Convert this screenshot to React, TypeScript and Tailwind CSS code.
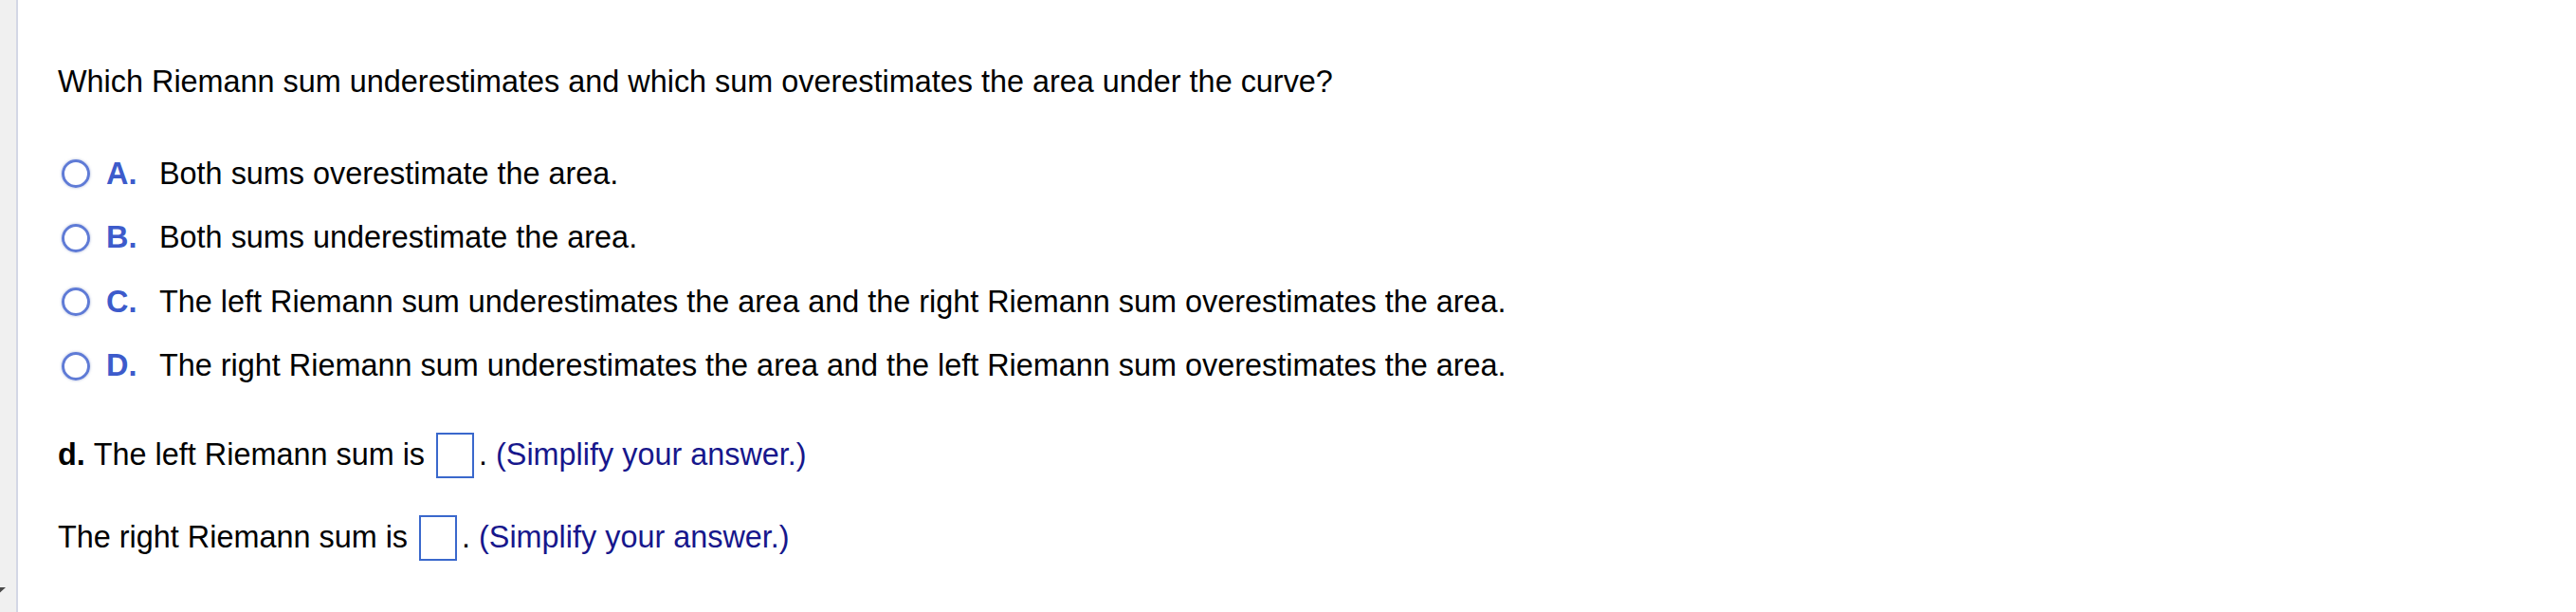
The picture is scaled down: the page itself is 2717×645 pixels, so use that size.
import React from 'react';

const options = [
  { letter: 'A.', text: 'Both sums overestimate the area.' },
  { letter: 'B.', text: 'Both sums underestimate the area.' },
  { letter: 'C.', text: 'The left Riemann sum underestimates the area and the right Riemann sum overestimates the area.' },
  { letter: 'D.', text: 'The right Riemann sum underestimates the area and the left Riemann sum overestimates the area.' },
];

const AnswerBox = () => (
  <span className="inline-block w-[40px] h-[48px] border-2 border-[#3a68cc] bg-white ml-[3px] mr-[5px] shrink-0"></span>
);

export default function App() {
  return (
    <div className="flex h-[645px] w-full bg-white text-black font-['Liberation_Sans',Arial,sans-serif] text-[32.4px]">
      {/* left gutter */}
      <aside className="w-[19px] shrink-0 bg-[#f0f0f0] border-r-2 border-[#d3d7e5] pt-[619px]">
        <svg width="6" height="6" viewBox="0 0 6 6">
          <path d="M0 0H6L0 5.5Z" fill="#4a4a4a" />
        </svg>
      </aside>

      <main className="flex-1 min-w-0 pl-[42px]">
        <p className="mt-[66px] leading-[40px]">
          Which Riemann sum underestimates and which sum overestimates the area under the curve?
        </p>

        <div className="mt-[57px] flex flex-col gap-[27.6px]">
          {options.map((o) => (
            <div key={o.letter} className="flex items-center h-[40px]">
              <span className="w-[30px] h-[30px] ml-[4px] rounded-full border-[3px] border-[#5f7bd6] shadow-[0_0_2px_1px_rgba(180,190,220,0.5)] shrink-0"></span>
              <span className="ml-[17px] w-[56px] font-bold text-[#3d5bcb]">{o.letter}</span>
              <span className="whitespace-nowrap">{o.text}</span>
            </div>
          ))}
        </div>

        <div className="mt-[50px] flex items-center h-[48px] whitespace-nowrap">
          <span className="font-bold">d.</span>
          <span>&nbsp;The left Riemann sum is&nbsp;</span>
          <AnswerBox />
          <span>.</span>
          <span className="text-[#17178c]">&nbsp;(Simplify your answer.)</span>
        </div>

        <div className="mt-[39px] flex items-center h-[48px] whitespace-nowrap">
          <span>The right Riemann sum is&nbsp;</span>
          <AnswerBox />
          <span>.</span>
          <span className="text-[#17178c]">&nbsp;(Simplify your answer.)</span>
        </div>
      </main>
    </div>
  );
}
